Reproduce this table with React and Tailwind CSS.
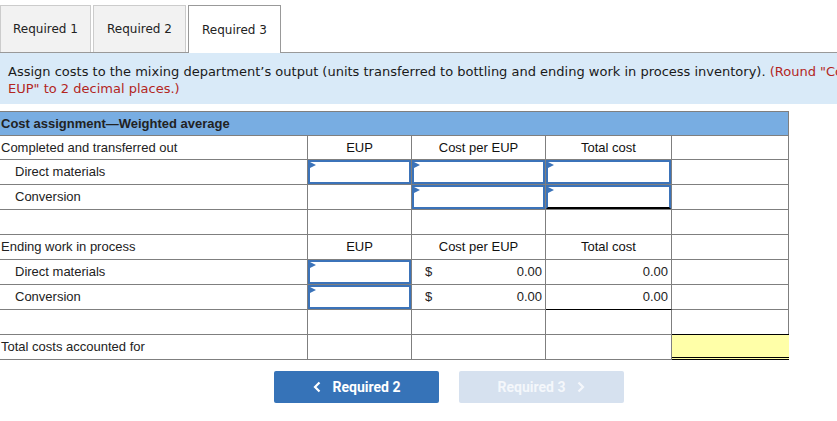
import React from 'react'

const BLUE = 'border-[#3b73b9]'

function Input({ bottom }) {
  return (
    <div className={`relative h-full w-full border-2 ${BLUE} ${bottom ? 'border-b-black' : ''} bg-white`}>
      <span className="absolute left-0 top-0 h-0 w-0 border-y-[3px] border-y-transparent border-l-[6px] border-l-[#3b73b9]" />
    </div>
  )
}

function Cell({ children, className = '', w }) {
  return <div className={`border-r border-b border-[#7f7f7f] ${w} ${className}`}>{children}</div>
}

const W = ['w-[308px]', 'w-[104px]', 'w-[134px]', 'w-[126px]', 'w-[117px]']

function Row({ h = 'h-[25px]', cells }) {
  return (
    <div className={`flex ${h}`}>
      {cells.map((c, i) => (
        <Cell key={i} w={W[i]} className={c?.cls || ''}>{c?.node}</Cell>
      ))}
    </div>
  )
}

const label = (t, indent) => ({
  node: <span className={indent ? 'pl-[15px]' : 'pl-px'}>{t}</span>,
  cls: 'flex items-center',
})
const head = t => ({ node: t, cls: 'flex items-center justify-center text-[#111]' })
const inp = bottom => ({ node: <Input bottom={bottom} />, cls: '' })
const money = (dollar, val, under) => ({
  node: (
    <>
      {dollar && <span className="pl-[13px]">$</span>}
      <span className="ml-auto pr-[3px]">{val}</span>
    </>
  ),
  cls: `flex items-center ${under ? 'border-b-black' : ''}`,
})

export default function App() {
  return (
    <div className="w-[837px] h-[421px] overflow-hidden bg-white">
      <div className="flex items-end pt-[5px] border-b border-[#999] font-['DejaVu_Sans',sans-serif] text-[12px] text-[#222]">
        <div className="w-[91px] h-[47px] flex items-center justify-center bg-[#f2f2f2] border border-b-0 border-[#ccc]">Required 1</div>
        <div className="ml-[2px] w-[93px] h-[47px] flex items-center justify-center bg-[#f2f2f2] border border-b-0 border-[#ccc]">Required 2</div>
        <div className="ml-[2px] w-[93px] h-[48px] -mb-px flex items-center justify-center bg-white border border-b-0 border-[#999]">Required 3</div>
      </div>

      <div className="w-[900px] bg-[#d9eaf8] pt-[10px] pb-[7px] pl-[8px] font-['DejaVu_Sans',sans-serif] text-[13px] leading-[17px] text-[#1a1a1a] whitespace-nowrap">
        Assign costs to the mixing department’s output (units transferred to bottling and ending work in process inventory).{' '}
        <span className="text-[#b3261e]">(Round "Cost per</span>
        <br />
        <span className="text-[#b3261e]">EUP" to 2 decimal places.)</span>
      </div>

      <div className="mt-[7px] w-[789px] border-t border-[#7f7f7f] font-['Liberation_Sans',Arial,sans-serif] text-[13px] text-[#222]">
        <div className="h-[24px] flex items-center bg-[#78ade2] border-r border-b border-[#7f7f7f] pl-px font-bold">
          Cost assignment—Weighted average
        </div>
        <Row h="h-[24px]" cells={[label('Completed and transferred out'), head('EUP'), head('Cost per EUP'), head('Total cost'), null]} />
        <Row cells={[label('Direct materials', true), inp(), inp(), inp(), null]} />
        <Row cells={[label('Conversion', true), null, inp(), inp(true), null]} />
        <Row cells={[null, null, null, null, null]} />
        <Row cells={[label('Ending work in process'), head('EUP'), head('Cost per EUP'), head('Total cost'), null]} />
        <Row cells={[label('Direct materials', true), inp(), money(true, '0.00'), money(false, '0.00'), null]} />
        <Row cells={[label('Conversion', true), inp(), money(true, '0.00'), money(false, '0.00', true), null]} />
        <Row cells={[null, null, null, null, null]} />
        <div className="flex h-[25px]">
          <Cell w={W[0]} className="flex items-center"><span className="pl-px">Total costs accounted for</span></Cell>
          <Cell w={W[1]} />
          <Cell w={W[2]} />
          <Cell w={W[3]} />
          <div className="w-[117px] -mt-px h-[26px] bg-[#ffffa8] border-t border-black border-b-[3px] border-b-black border-double" />
        </div>
      </div>

      <div className="flex gap-[20px] ml-[274px] mt-[11px] font-['Roboto',sans-serif] text-[14px] font-bold text-white">
        <button className="w-[165px] h-[32px] rounded-[2px] bg-[#3673b8] flex items-center justify-center gap-[12px]">
          <svg width="8" height="12" viewBox="0 0 8 12"><path d="M6.5 1.5 2 6l4.5 4.5" fill="none" stroke="white" strokeWidth="2.2" /></svg>
          Required 2
        </button>
        <button className="w-[165px] h-[32px] rounded-[2px] bg-[#d6e1ef] flex items-center justify-center gap-[12px] text-[#f4f7fb]">
          Required 3
          <svg width="8" height="12" viewBox="0 0 8 12"><path d="M1.5 1.5 6 6l-4.5 4.5" fill="none" stroke="#f4f7fb" strokeWidth="2.2" /></svg>
        </button>
      </div>
    </div>
  )
}
